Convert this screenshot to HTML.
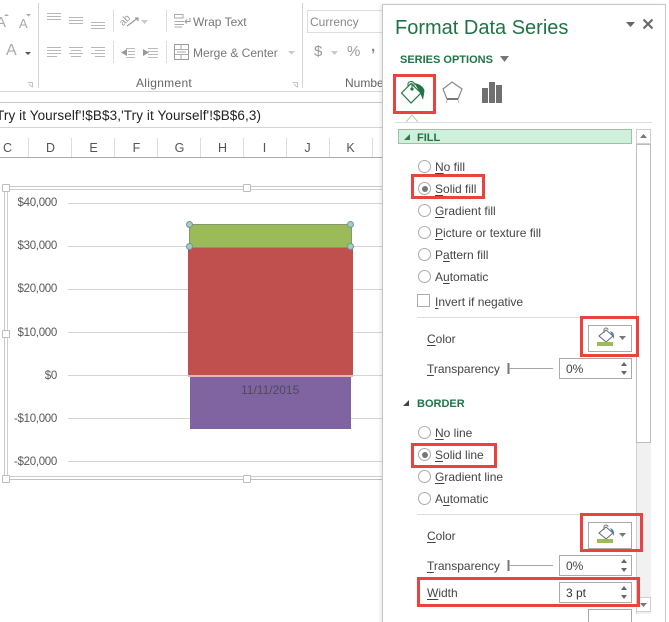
<!DOCTYPE html>
<html><head><meta charset="utf-8"><style>
html,body{margin:0;padding:0;background:#fff}
#p{position:relative;width:669px;height:622px;overflow:hidden;background:#fff;font-family:"Liberation Sans",sans-serif;font-size:12px;color:#444}
#p div,#p span.t{position:absolute;white-space:nowrap}
.t{line-height:14px}
.h{background:#d4d4d4;height:1px;left:68px;width:314px}
.y{color:#595959;font-size:11.5px;letter-spacing:-.3px;text-align:right;width:57px;left:0;line-height:14px}
.c{color:#555;top:141px;width:43px;text-align:center;font-size:12.5px}
.red{border:3px solid #e9423f;box-sizing:border-box}
.o{color:#444;font-size:12px;left:435px}
.o u{text-decoration-thickness:1px;text-underline-offset:2px}
.rb{width:11px;height:11px;border:1px solid #ababab;border-radius:50%;left:418px;background:#fff}
.rb i{position:absolute;left:2.5px;top:2.5px;width:6px;height:6px;border-radius:50%;background:#777}
.box{border:1px solid #aaa;box-sizing:border-box;background:#fff}
.hd{width:6px;height:6px;border:1px solid #bdbdbd;background:#fff;border-radius:1px}
.dot{width:5px;height:5px;border:1px solid #6f93b5;border-radius:50%;background:#a9cdb0}
</style></head><body><div id="p">

<svg style="position:absolute;left:0;top:0" width="380" height="92" fill="none" stroke="#b8b8b8" stroke-width="1">
<g stroke="#d5d5d5"><path d="M38.5 3V88M302.5 3V88"/></g>
<g stroke="#ddd"><path d="M113.5 10V32M113.5 41V63M166.5 10V32M166.5 41V63"/></g>
<path d="M47 13.5H61M47 16.5H61M47 19.5H61M69 17.5H83M69 20.5H83M69 23.5H83M91 22.5H105M91 25.5H105M91 28.5H105"/>
<path d="M47 47.5H61M47 50.5H61M47 53.5H61M47 56.5H57M69 47.5H83M71 50.5H81M69 53.5H83M71 56.5H81M91 47.5H105M95 50.5H105M91 53.5H105M95 56.5H105"/>
<path d="M126 48.5H135M128 51.5H135M128 54.5H135M126 57.5H135M148 48.5H158M148 51.5H158M148 54.5H158M148 57.5H158" stroke="#bbb"/>
<path d="M121 52.5L127 49V56ZM149 52.5L143 49V56Z" fill="#999" stroke="none"/>
<path d="M127 26L138 18M135 18H138V21" stroke="#999" stroke-width="1.2"/>
<path d="M141 20H148L144.5 24Z" fill="#c9c9c9" stroke="none"/>
<path d="M174.5 14.5H183V18H174.5ZM174.5 21.5H184M174.5 24.5H184M174.5 27H182" stroke="#aaa"/>
<path d="M190 18V21.5H185M187 19.5L185 21.5L187 23.5" stroke="#999"/>
<rect x="174.5" y="44.5" width="14" height="15" stroke="#999"/>
<path d="M174.5 49.5H188.5M174.5 54.5H188.5M177 52H186M181 44.5V49.5M181 54.5V59.5" stroke="#aaa"/>
<path d="M288 51H295L291.5 54.5Z" fill="#c9c9c9" stroke="none"/>
<path d="M331 51H338L334.5 55Z" fill="#c9c9c9" stroke="none"/>
<path d="M25 52H31L28 55Z" fill="#555" stroke="none"/>
<path d="M4 16L6.5 14L9 16ZM26 14H31L28.5 16.5Z" fill="#aaa" stroke="none"/>
<path d="M27.5 82.5H32.5V87.5M29 84L32 87M292.5 82.5H297.5V87.5M294 84L297 87" stroke="#c5c5c5"/>
</svg>
<span class="t" style="position:absolute;left:120px;top:14px;font-size:10px;color:#999;transform:rotate(-45deg)">ab</span>

<span class="t" style="position:absolute;left:-4px;top:16px;font-size:15px;color:#aaa">A</span>
<span class="t" style="position:absolute;left:19px;top:17px;font-size:13px;color:#aaa">A</span>
<span class="t" style="position:absolute;left:6px;top:44px;font-size:16px;color:#aaa">A</span>
<span class="t" style="position:absolute;left:193px;top:15px;color:#777;font-size:12px">Wrap Text</span>
<span class="t" style="position:absolute;left:193px;top:46px;color:#777;font-size:12px">Merge &amp; Center</span>
<div class="box" style="left:307px;top:10px;width:80px;height:23px;border-color:#ddd;color:#888;padding:4px 2px;font-size:12px">Currency</div>
<span class="t" style="position:absolute;left:314px;top:45px;color:#999;font-size:15px">$</span>
<span class="t" style="position:absolute;left:347px;top:45px;color:#999;font-size:15px">%</span>
<span class="t" style="position:absolute;left:371px;top:40px;color:#888;font-size:15px;font-weight:bold">,</span>
<svg style="position:absolute;left:330px;top:50px" width="10" height="8"><path d="M2 1H7L4.5 4Z" fill="#c9c9c9"/></svg>
<span class="t" style="position:absolute;left:136px;top:76px;color:#666;font-size:12px;letter-spacing:.3px">Alignment</span>
<span class="t" style="position:absolute;left:345px;top:76px;color:#666;font-size:12px">Number</span>

<div style="left:0;top:91px;width:382px;height:1px;background:#d8d8d8"></div>
<div style="left:0;top:102px;width:382px;height:1px;background:#c8c8c8"></div>
<div style="left:0;top:127px;width:382px;height:1px;background:#d5d5d5"></div>
<span class="t" style="position:absolute;left:-4px;top:109px;color:#222;font-size:13.5px;letter-spacing:.1px">Try it Yourself'!$B$3,'Try it Yourself'!$B$6,3)</span>

<!-- column headers -->
<div style="left:0;top:138px;width:382px;height:19px;border-bottom:1px solid #ababab;box-sizing:content-box"></div>
<svg style="position:absolute;left:0;top:138px" width="382" height="19"><path d="M28.5 0V19M71.5 0V19M114.5 0V19M157.5 0V19M200.5 0V19M243.5 0V19M286.5 0V19M329.5 0V19M372.5 0V19" stroke="#dcdcdc"/></svg>
<div class="c" style="left:-14px">C</div><div class="c" style="left:29px">D</div><div class="c" style="left:72px">E</div><div class="c" style="left:115px">F</div><div class="c" style="left:158px">G</div><div class="c" style="left:201px">H</div><div class="c" style="left:243px">I</div><div class="c" style="left:286px">J</div><div class="c" style="left:329px">K</div>

<!-- chart -->
<div style="left:4px;top:186px;width:380px;height:1px;background:#c8c8c8"></div>
<div style="left:7px;top:189px;width:378px;height:1px;background:#d0d0d0"></div>
<div style="left:4px;top:186px;width:1px;height:294px;background:#c8c8c8"></div>
<div style="left:7px;top:189px;width:1px;height:287px;background:#d0d0d0"></div>
<div style="left:4px;top:479px;width:380px;height:1px;background:#c0c0c0"></div>
<div style="left:7px;top:476px;width:378px;height:1px;background:#d0d0d0"></div>
<div class="hd" style="left:2px;top:184px"></div><div class="hd" style="left:243px;top:184px"></div>
<div class="hd" style="left:2px;top:475px"></div><div class="hd" style="left:243px;top:475px"></div>
<div class="hd" style="left:2px;top:330px"></div>

<div class="h" style="top:203px"></div><div class="h" style="top:246px"></div><div class="h" style="top:289px"></div><div class="h" style="top:332px"></div><div class="h" style="top:375px"></div><div class="h" style="top:418px"></div><div class="h" style="top:461px"></div>
<div class="y" style="top:196px">$40,000</div><div class="y" style="top:239px">$30,000</div><div class="y" style="top:282px">$20,000</div><div class="y" style="top:326px">$10,000</div><div class="y" style="top:369px">$0</div><div class="y" style="top:412px">-$10,000</div><div class="y" style="top:455px">-$20,000</div>

<div style="left:188px;top:247px;width:165px;height:128px;background:#c0504d"></div>
<div style="left:188px;top:375px;width:165px;height:2px;background:#e8b5b2"></div>
<div style="left:190px;top:377px;width:161px;height:52px;background:#8064a2"></div>
<div style="left:189px;top:224px;width:161px;height:22px;background:#9bbb59;border:1px solid #86976b"></div>
<div class="dot" style="left:186px;top:221px"></div><div class="dot" style="left:347px;top:221px"></div><div class="dot" style="left:186px;top:243px"></div><div class="dot" style="left:347px;top:243px"></div>
<span class="t" style="position:absolute;left:241px;top:383px;color:#4f4a58;font-size:12px">11/11/2015</span>

<!-- panel -->
<div style="left:382px;top:4px;width:284px;height:630px;background:#fff;border:1px solid #c6c6c6;box-sizing:border-box;box-shadow:-2px 0 3px rgba(0,0,0,.08)"></div>
<span class="t" style="position:absolute;left:395px;top:16px;font-size:20px;line-height:24px;color:#217346">Format Data Series</span>
<svg style="position:absolute;left:620px;top:15px" width="40" height="16"><path d="M6 7H15L10.5 12Z" fill="#666"/><path d="M23.5 4.5L32.5 13.5M32.5 4.5L23.5 13.5" stroke="#666" stroke-width="2"/></svg>
<span class="t" style="position:absolute;left:400px;top:53px;font-size:11px;font-weight:bold;color:#217346">SERIES OPTIONS</span>
<svg style="position:absolute;left:498px;top:54px" width="14" height="10"><path d="M2 2H11L6.5 8Z" fill="#777"/></svg>

<div class="red" style="left:393px;top:74px;width:43px;height:40px"></div>
<svg style="position:absolute;left:400px;top:78px" width="130" height="46" fill="none">
<path d="M1.5 15L11 5.5L21 15L11 25Z" stroke="#217346" stroke-width="1.2"/>
<path d="M8 8V5.500A3.500 3.500 0 0 1 14 5V8M12 5V11" stroke="#217346"/>
<circle cx="12" cy="11" r="1.6" fill="#217346"/>
<path d="M14 5C20 6 24 9 24.5 13L23 22L21 17L18 11Z" fill="#217346"/>
<path d="M52 4L62 11L58 21H47L43 11Z" stroke="#8a8a8a" stroke-width="1.2"/>
<path d="M47 21H58" stroke="#777" stroke-width="2"/>
<path d="M47 22L46 25M58 22L59 25" stroke="#bbb"/>
<path d="M82 10H88V25H82ZM89 4H95V25H89ZM96 7H102V25H96Z" fill="#707070"/>
<path d="M6 44L12 37L18 44" stroke="#c5c5c5"/>
</svg>
<div style="left:395px;top:122px;width:257px;height:1px;background:#ddd"></div>
<div style="left:398px;top:129px;width:234px;height:15px;background:#d2eedd;border:1px solid #90c7a5;box-sizing:border-box"></div>
<svg style="position:absolute;left:402px;top:132px" width="10" height="10"><path d="M2 8H8V2Z" fill="#2d7a4e"/></svg>
<span class="t" style="position:absolute;left:417px;top:131px;font-size:11px;font-weight:bold;color:#217346">FILL</span>

<!-- scrollbar -->
<div style="left:636px;top:144px;width:1px;height:470px;background:#cfcfcf"></div>
<div style="left:637px;top:144px;width:14px;height:470px;background:#f1f1f1"></div>
<div class="box" style="left:636px;top:129px;width:15px;height:15px;border-color:#cfcfcf"></div>
<svg style="position:absolute;left:636px;top:129px" width="15" height="15"><path d="M4 9H11L7.5 5Z" fill="#777"/></svg>
<div class="box" style="left:636px;top:144px;width:15px;height:299px;border-color:#bcbcbc"></div>
<div class="box" style="left:636px;top:597px;width:15px;height:15px;border-color:#cfcfcf"></div>
<svg style="position:absolute;left:636px;top:597px" width="15" height="15"><path d="M4 6H11L7.5 10Z" fill="#777"/></svg>

<!-- fill options -->
<div class="rb" style="top:160px"></div><span class="t o" style="position:absolute;top:160px"><u>N</u>o fill</span>
<div class="rb" style="top:182px"><i></i></div><span class="t o" style="position:absolute;top:182px"><u>S</u>olid fill</span>
<div class="red" style="left:411px;top:174px;width:74px;height:25px"></div>
<div class="rb" style="top:204px"></div><span class="t o" style="position:absolute;top:204px"><u>G</u>radient fill</span>
<div class="rb" style="top:226px"></div><span class="t o" style="position:absolute;top:226px"><u>P</u>icture or texture fill</span>
<div class="rb" style="top:248px"></div><span class="t o" style="position:absolute;top:248px">P<u>a</u>ttern fill</span>
<div class="rb" style="top:270px"></div><span class="t o" style="position:absolute;top:270px">A<u>u</u>tomatic</span>
<div class="box" style="left:417px;top:294px;width:13px;height:13px;border-color:#ababab"></div><span class="t o" style="position:absolute;top:295px"><u>I</u>nvert if negative</span>
<div style="left:417px;top:317px;width:211px;height:1px;background:#ddd"></div>
<span class="t o" style="position:absolute;left:427px;top:332px"><u>C</u>olor</span>
<div class="box" style="left:588px;top:325px;width:44px;height:27px"></div>
<div class="red" style="left:580px;top:316px;width:59px;height:41px"></div>
<svg style="position:absolute;left:596px;top:327px" width="32" height="20" fill="none"><path d="M3 9L10 3L17 9L10 15Z" stroke="#666"/><path d="M8 6V3A2 2 0 0 1 12 3" stroke="#777"/><path d="M14 4C17 5 18.5 7 18 12L16 8Z" fill="#3b7fc0"/><rect x="1" y="15" width="16" height="4" fill="#9bbb59"/><path d="M23 9H30L26.5 13Z" fill="#777"/></svg>
<span class="t o" style="position:absolute;left:427px;top:362px"><u>T</u>ransparency</span>
<svg style="position:absolute;left:506px;top:362px" width="50" height="14"><path d="M2.5 1V12" stroke="#777" stroke-width="2"/><path d="M3 6.5H47" stroke="#a5a5a5"/></svg>
<div class="box" style="left:559px;top:358px;width:73px;height:21px;color:#444;padding:3px 6px">0%<svg style="position:absolute;left:58px;top:0" width="12" height="19"><path d="M3 7H9L6 3ZM3 12H9L6 16Z" fill="#666"/></svg></div>

<!-- border -->
<svg style="position:absolute;left:402px;top:398px" width="10" height="10"><path d="M1 8H7V2Z" fill="#444"/></svg>
<span class="t" style="position:absolute;left:417px;top:397px;font-size:11px;font-weight:bold;color:#217346">BORDER</span>
<div class="rb" style="top:426px"></div><span class="t o" style="position:absolute;top:426px"><u>N</u>o line</span>
<div class="rb" style="top:448px"><i></i></div><span class="t o" style="position:absolute;top:448px"><u>S</u>olid line</span>
<div class="red" style="left:411px;top:443px;width:86px;height:25px"></div>
<div class="rb" style="top:470px"></div><span class="t o" style="position:absolute;top:470px"><u>G</u>radient line</span>
<div class="rb" style="top:492px"></div><span class="t o" style="position:absolute;top:492px">A<u>u</u>tomatic</span>
<div style="left:417px;top:514px;width:211px;height:1px;background:#ddd"></div>
<span class="t o" style="position:absolute;left:427px;top:529px"><u>C</u>olor</span>
<div class="box" style="left:588px;top:522px;width:44px;height:27px"></div>
<div class="red" style="left:580px;top:513px;width:63px;height:39px"></div>
<svg style="position:absolute;left:596px;top:524px" width="32" height="20" fill="none"><path d="M3 9L10 3L17 9L10 15Z" stroke="#666"/><path d="M8 6V3A2 2 0 0 1 12 3" stroke="#777"/><path d="M14 4C17 5 18.5 7 18 12L16 8Z" fill="#3b7fc0"/><rect x="1" y="15" width="16" height="4" fill="#9bbb59"/><path d="M23 9H30L26.5 13Z" fill="#777"/></svg>
<span class="t o" style="position:absolute;left:427px;top:559px"><u>T</u>ransparency</span>
<svg style="position:absolute;left:506px;top:559px" width="50" height="14"><path d="M2.5 1V12" stroke="#777" stroke-width="2"/><path d="M3 6.5H47" stroke="#a5a5a5"/></svg>
<div class="box" style="left:559px;top:555px;width:73px;height:21px;color:#444;padding:3px 6px">0%<svg style="position:absolute;left:58px;top:0" width="12" height="19"><path d="M3 7H9L6 3ZM3 12H9L6 16Z" fill="#666"/></svg></div>
<span class="t o" style="position:absolute;left:427px;top:586px"><u>W</u>idth</span>
<div class="box" style="left:559px;top:582px;width:73px;height:21px;color:#333;padding:3px 6px">3 pt<svg style="position:absolute;left:58px;top:0" width="12" height="19"><path d="M3 7H9L6 3ZM3 12H9L6 16Z" fill="#666"/></svg></div>
<div class="red" style="left:417px;top:577px;width:223px;height:30px"></div>
<div class="box" style="left:588px;top:609px;width:44px;height:20px"></div>
</div></body></html>
